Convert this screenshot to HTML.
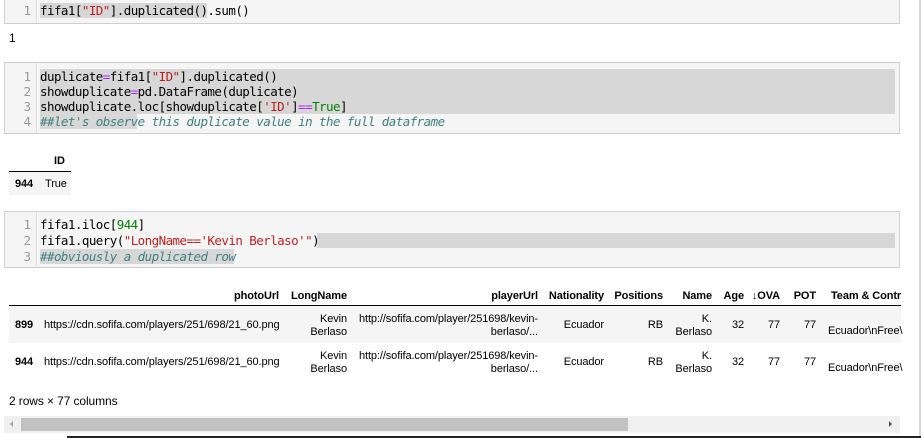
<!DOCTYPE html>
<html><head><meta charset="utf-8"><style>
body{margin:0;width:921px;height:438px;background:#fff;position:relative;overflow:hidden;font-family:"Liberation Sans",Arial,sans-serif}
.cell{position:absolute;left:4px;width:894px;background:#f5f5f5;border:1px solid #cfcfcf}
.gut{position:absolute;left:0;top:0;bottom:0;width:31px;border-right:1px solid #ddd}
.ln{position:absolute;left:0;width:26px;text-align:right;color:#999;font:12.5px "DejaVu Sans Mono","Liberation Mono",monospace}
.cd{position:absolute;left:35px;white-space:pre;color:#000;font:12.5px "DejaVu Sans Mono","Liberation Mono",monospace;letter-spacing:-0.55px}
.hl{position:absolute;background:#d7d7d7}
.s{color:#ba2121}.o{color:#aa22ff}.k{color:#008000}.n{color:#008000}.c{color:#408080;font-style:italic}
.t{position:absolute;font-size:11px;color:#000;white-space:nowrap;letter-spacing:-0.1px;line-height:13px}
.b{font-weight:bold}
.r{text-align:right}
</style></head><body>
<div class="cell" style="top:-2px;height:24px">
<div class="gut"></div>
<div class="hl" style="left:35px;top:4px;width:167px;height:15px"></div>
<div class="ln" style="top:4px">1</div>
<div class="cd" style="top:4px">fifa1[<span class="s">"ID"</span>].duplicated().sum()</div>
</div>
<div class="t" style="left:9px;top:32px;font-size:12px">1</div>

<div class="cell" style="top:62px;height:70px">
<div class="gut"></div>
<div class="hl" style="left:35px;top:6px;width:855px;height:45px"></div>
<div class="hl" style="left:35px;top:51px;width:97px;height:15px"></div>
<div class="ln" style="top:6px">1</div><div class="cd" style="top:6px">duplicate<span class="o">=</span>fifa1[<span class="s">"ID"</span>].duplicated()</div>
<div class="ln" style="top:21px">2</div><div class="cd" style="top:21px">showduplicate<span class="o">=</span>pd.DataFrame(duplicate)</div>
<div class="ln" style="top:36px">3</div><div class="cd" style="top:36px">showduplicate.loc[showduplicate[<span class="s">'ID'</span>]<span class="o">==</span><span class="k">True</span>]</div>
<div class="ln" style="top:51px">4</div><div class="cd c" style="top:51px">##let's observe this duplicate value in the full dataframe</div>
</div>

<div class="t b" style="left:54px;top:155px">ID</div>
<div style="position:absolute;left:9px;top:171px;width:62px;height:1px;background:#000"></div>
<div style="position:absolute;left:9px;top:172px;width:62px;height:23px;background:#f5f5f5"></div>
<div class="t b" style="left:15px;top:178px">944</div>
<div class="t" style="left:45px;top:178px">True</div>

<div class="cell" style="top:211px;height:55px">
<div class="gut"></div>
<div class="hl" style="left:312px;top:21px;width:578px;height:15px"></div>
<div class="hl" style="left:35px;top:37px;width:194px;height:15px"></div>
<div class="ln" style="top:5px">1</div><div class="cd" style="top:5px">fifa1.iloc[<span class="n">944</span>]</div>
<div class="ln" style="top:21px">2</div><div class="cd" style="top:21px">fifa1.query(<span class="s">"LongName=='Kevin Berlaso'"</span>)</div>
<div class="ln" style="top:37px">3</div><div class="cd c" style="top:37px">##obviously a duplicated row</div>
</div>

<div class="t b r" style="right:642px;top:290px">photoUrl</div>
<div class="t b r" style="right:574px;top:290px">LongName</div>
<div class="t b r" style="right:383px;top:290px">playerUrl</div>
<div class="t b r" style="right:317px;top:290px">Nationality</div>
<div class="t b r" style="right:258px;top:290px">Positions</div>
<div class="t b r" style="right:209px;top:290px">Name</div>
<div class="t b r" style="right:177px;top:290px">Age</div>
<div class="t b r" style="right:141px;top:290px">↓OVA</div>
<div class="t b r" style="right:105px;top:290px">POT</div>
<div class="t b" style="left:831px;top:290px">Team &amp; Contr</div>
<div style="position:absolute;left:9px;top:305px;width:892px;height:1px;background:#000"></div>
<div style="position:absolute;left:9px;top:306px;width:892px;height:37px;background:#f5f5f5"></div>

<div class="t b" style="left:15px;top:319px">899</div>
<div class="t" style="left:44px;top:319px">https://cdn.sofifa.com/players/251/698/21_60.png</div>
<div class="t r" style="right:574px;top:313px">Kevin<br>Berlaso</div>
<div class="t r" style="right:383px;top:313px">http://sofifa.com/player/251698/kevin-<br>berlaso/...</div>
<div class="t r" style="right:317px;top:319px">Ecuador</div>
<div class="t r" style="right:258px;top:319px">RB</div>
<div class="t r" style="right:209px;top:313px">K.<br>Berlaso</div>
<div class="t r" style="right:177px;top:319px">32</div>
<div class="t r" style="right:141px;top:319px">77</div>
<div class="t r" style="right:105px;top:319px">77</div>
<div class="t" style="left:828px;top:325px">Ecuador\nFree\</div>

<div class="t b" style="left:15px;top:356px">944</div>
<div class="t" style="left:44px;top:356px">https://cdn.sofifa.com/players/251/698/21_60.png</div>
<div class="t r" style="right:574px;top:350px">Kevin<br>Berlaso</div>
<div class="t r" style="right:383px;top:350px">http://sofifa.com/player/251698/kevin-<br>berlaso/...</div>
<div class="t r" style="right:317px;top:356px">Ecuador</div>
<div class="t r" style="right:258px;top:356px">RB</div>
<div class="t r" style="right:209px;top:350px">K.<br>Berlaso</div>
<div class="t r" style="right:177px;top:356px">32</div>
<div class="t r" style="right:141px;top:356px">77</div>
<div class="t r" style="right:105px;top:356px">77</div>
<div class="t" style="left:828px;top:362px">Ecuador\nFree\</div>

<div class="t" style="left:9px;top:395px;font-size:12px">2 rows × 77 columns</div>

<div style="position:absolute;left:4px;top:416px;width:896px;height:17px;background:#f0f0f0"></div>
<div style="position:absolute;left:21px;top:418px;width:607px;height:13px;background:#c1c1c1"></div>
<div style="position:absolute;left:10px;top:421px;width:0;height:0;border-top:3px solid transparent;border-bottom:3px solid transparent;border-right:3px solid #a3a3a3"></div>
<div style="position:absolute;left:889px;top:421px;width:0;height:0;border-top:3px solid transparent;border-bottom:3px solid transparent;border-left:3px solid #505050"></div>
<div style="position:absolute;left:919px;top:0;width:2px;height:438px;background:#d6d6d6"></div>
<div style="position:absolute;left:67px;top:436px;width:854px;height:2px;background:#222"></div>
</body></html>
